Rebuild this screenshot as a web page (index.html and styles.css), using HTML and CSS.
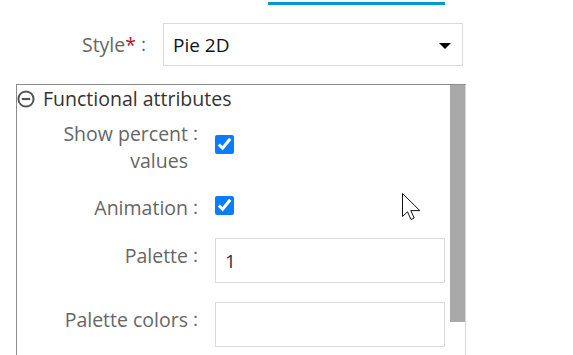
FILE: index.html
```html
<!DOCTYPE html>
<html lang="en">
<head>
  <meta charset="UTF-8" />
  <meta name="viewport" content="width=device-width, initial-scale=1.0"/>
  <title>Chart properties</title>
  <link rel="stylesheet" href="styles.css">
</head>
<body>
  <div class="tab-line"></div>

  <div class="style-row">
    <label class="field-label">
      <span class="label-text">Style<span class="req">*</span></span><span class="colon">：</span>
    </label>
    <div class="select">
      <span>Pie 2D</span>
      <i class="caret"></i>
    </div>
  </div>

  <div class="panel">
    <div class="panel-body">
      <div class="group-title">
        <svg class="collapse-icon" width="18" height="18" viewBox="0 0 18 18">
          <circle cx="9" cy="9" r="7.6" fill="none" stroke="#555" stroke-width="2"/>
          <line x1="4.8" y1="9" x2="13.2" y2="9" stroke="#555" stroke-width="2.2"/>
        </svg>
        Functional attributes
      </div>

      <!-- Show percent -->
      <div class="field field-percent">
        <label class="field-label">
          <span class="label-text">Show percent values</span><span class="colon">：</span>
        </label>
        <input type="checkbox" class="check" checked>
      </div>

      <!-- Animation -->
      <div class="field field-anim">
        <label class="field-label">
          <span class="label-text">Animation</span><span class="colon">：</span>
        </label>
        <input type="checkbox" class="check" checked>
      </div>

      <!-- Palette -->
      <div class="field field-input">
        <label class="field-label">
          <span class="label-text">Palette</span><span class="colon">：</span>
        </label>
        <input type="text" class="text-input" value="1">
      </div>

      <div class="field field-input field-last">
        <label class="field-label">
          <span class="label-text">Palette colors</span><span class="colon">：</span>
        </label>
        <input type="text" class="text-input" value="">
      </div>
    </div>

    <div class="scrollbar"><div class="thumb"></div></div>
  </div>

  <!-- mouse pointer -->
  <svg class="pointer" width="20" height="28" viewBox="0 0 20 28">
    <path d="M0.5 0.5 L0.5 23.5 L5.5 18.8 L9 26.5 L12.2 25 L8.8 17.6 L17.8 17.6 Z" fill="#fff" stroke="#111" stroke-width="1"/>
  </svg>
</body>
</html>
```

FILE: styles.css
```css
* {
  box-sizing: border-box;
}

body {
  margin: 0;
  font-family: "Open Sans", "Noto Sans CJK JP", sans-serif;
  background-color: #fff;
  overflow: hidden;
}

.tab-line {
  width: 177px;
  height: 3px;
  margin: 2px 0 0 268px;
  background-color: #0098d0;
}

/* label column */
.field-label {
  display: flex;
  font-size: 19.5px;
  line-height: 27px;
  color: #666;
}

.label-text {
  text-align: right;
}

.colon {
  font-family: "Noto Sans CJK JP", sans-serif;
  font-size: 15px;
}

.req {
  color: #b8111f;
}

/* top row */
.style-row {
  display: flex;
  margin-top: 18px;
}

.style-row .field-label {
  line-height: 43px;
  margin-right: 12px;
}

.style-row .label-text {
  width: 136px;
}

.select {
  width: 300px;
  height: 43px;
  border: 1px solid #d9d9d9;
  display: flex;
  align-items: center;
  justify-content: space-between;
  padding: 0 11px 0 9px;
  font-size: 19px;
  color: #111;
}

.caret {
  width: 0;
  height: 0;
  margin-top: 3px;
  border-left: 6px solid transparent;
  border-right: 6px solid transparent;
  border-top: 6px solid #000;
}

/* panel */
.panel {
  display: flex;
  width: 450px;
  height: 300px;
  margin: 18px 0 0 16px;
  border-top: 1px solid #8c8c8c;
  border-left: 1px solid #8c8c8c;
  border-right: 1px solid #d6d6d6;
}

.panel-body {
  flex: 1;
}

.scrollbar {
  width: 15px;
}

.thumb {
  height: 237px;
  background-color: #a9a9a9;
}

.group-title {
  display: flex;
  align-items: center;
  gap: 8px;
  font-size: 19.5px;
  line-height: 27px;
  color: #333;
}

.collapse-icon {
  margin-top: 1px;
}

.field {
  display: flex;
  align-items: flex-start;
}

.field .label-text {
  width: 171px;
}

.field .field-label {
  margin-right: 12px;
}

.field-percent {
  margin-top: 8px;
}

.field-anim {
  margin-top: 20px;
}

.field-input {
  margin-top: 17px;
}

.field-last {
  margin-top: 19px;
}

.field-input .field-label {
  padding-top: 4px;
}

.check {
  width: 19px;
  height: 19px;
  margin: 15px 0 0;
  accent-color: #0a7cff;
}

.field-anim .check {
  margin-top: 2px;
}

.text-input {
  width: 230px;
  height: 45px;
  border: 1px solid #d9d9d9;
  padding: 0 9px;
  font-family: "Open Sans", sans-serif;
  font-size: 19px;
  color: #333;
  outline: none;
}

.pointer {
  position: absolute;
  left: 402px;
  top: 193px;
}
```
